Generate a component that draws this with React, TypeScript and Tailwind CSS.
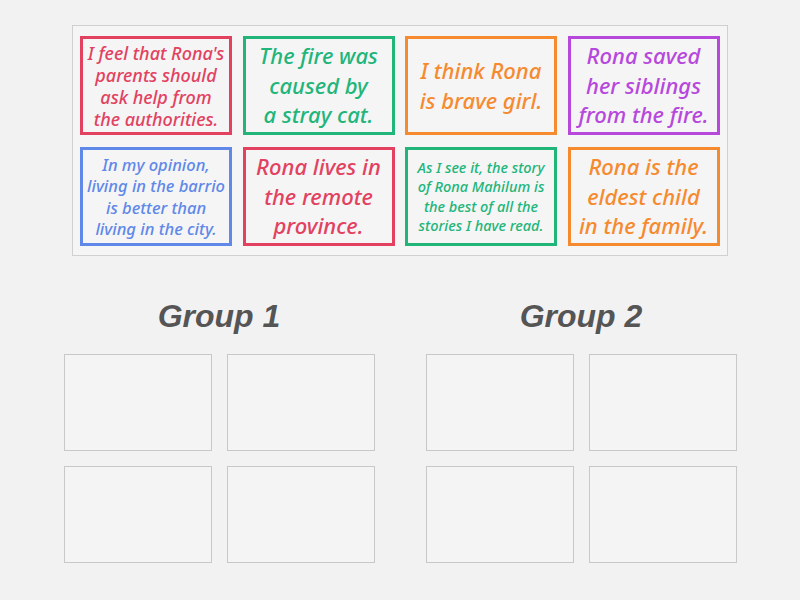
const cards = [
  { lines: ["I feel that Rona's", "parents should", "ask help from", "the authorities."], color: "border-[#e2425f] text-[#e2425f]", size: "text-[18px] leading-[22px]" },
  { lines: ["The fire was", "caused by", "a stray cat."], color: "border-[#22b57a] text-[#22b57a]", size: "text-[22px] leading-[29.5px]" },
  { lines: ["I think Rona", "is brave girl."], color: "border-[#f68a2e] text-[#f68a2e]", size: "text-[22px] leading-[29.5px]" },
  { lines: ["Rona saved", "her siblings", "from the fire."], color: "border-[#b748dc] text-[#b748dc]", size: "text-[22px] leading-[29.5px]" },
  { lines: ["In my opinion,", "living in the barrio", "is better than", "living in the city."], color: "border-[#5f88e8] text-[#5f88e8]", size: "text-[16.5px] leading-[21.5px]" },
  { lines: ["Rona lives in", "the remote", "province."], color: "border-[#e2425f] text-[#e2425f]", size: "text-[22px] leading-[29.5px]" },
  { lines: ["As I see it, the story", "of Rona Mahilum is", "the best of all the", "stories I have read."], color: "border-[#22b57a] text-[#22b57a]", size: "text-[14.5px] leading-[19.5px]" },
  { lines: ["Rona is the", "eldest child", "in the family."], color: "border-[#f68a2e] text-[#f68a2e]", size: "text-[22px] leading-[29.5px]" },
];

function Card({ lines, color, size }: { lines: string[]; color: string; size: string }) {
  return (
    <div
      className={`flex h-[99px] w-[152px] flex-col items-center justify-center border-[3px] bg-[#f5f5f6] text-center font-medium italic ${color} ${size}`}
      style={{ fontFamily: '"Noto Sans", sans-serif' }}
    >
      {lines.map((line) => (
        <span key={line} className="whitespace-nowrap">
          {line}
        </span>
      ))}
    </div>
  );
}

function Group({ title }: { title: string }) {
  return (
    <div className="flex w-[311px] flex-col items-center">
      <h2
        className="mb-[19px] text-[32px] font-bold italic leading-[38px] text-[#555555]"
        style={{ fontFamily: '"Liberation Sans", Arial, sans-serif' }}
      >
        {title}
      </h2>
      <div className="grid grid-cols-2 gap-[15px]">
        {[0, 1, 2, 3].map((i) => (
          <div key={i} className="h-[97px] w-[148px] border border-[#c9c8c9] bg-[#f5f4f5]" />
        ))}
      </div>
    </div>
  );
}

export default function App() {
  return (
    <div className="h-[600px] w-[800px] bg-[#f3f2f3] pt-[25px]">
      <div className="mx-auto w-[656px] border border-[#d0d0d2] bg-[#f5f5f6] px-[7px] pb-[9px] pt-[10px]">
        <div className="grid grid-cols-4 gap-x-[10px] gap-y-[12px]">
          {cards.map((c, i) => (
            <Card key={i} {...c} />
          ))}
        </div>
      </div>
      <div className="mt-[41px] flex justify-center gap-[51px]">
        <Group title="Group 1" />
        <Group title="Group 2" />
      </div>
    </div>
  );
}
